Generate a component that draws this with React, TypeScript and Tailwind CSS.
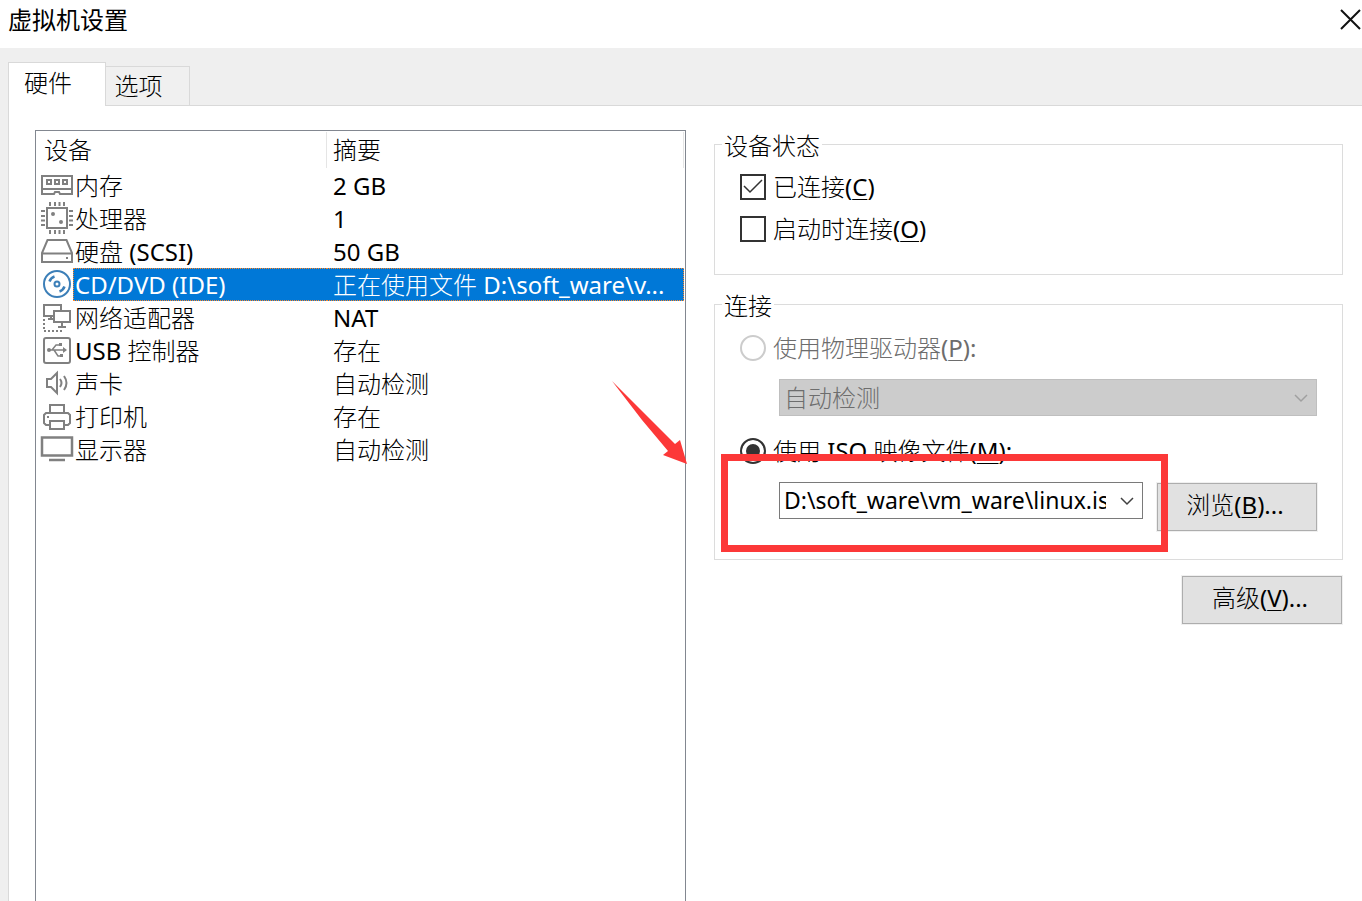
import React, { useState } from 'react';

interface Device {
  id: string;
  name: string;
  summary: string;
  icon: React.ReactNode;
}

const DEVICES: Device[] = [
  {
    id: 'memory',
    name: '内存',
    summary: '2 GB',
    icon: (
      <>
        <path d="M1 6h30v18H19l-1-2h-4l-1 2H1zM1 19h30" />
        <path d="M6 10h4v4H6zM14 10h4v4h-4zM22 10h4v4h-4z" />
      </>
    ),
  },
  {
    id: 'cpu',
    name: '处理器',
    summary: '1',
    icon: (
      <>
        <path d="M6 5h20v20H6z" />
        <path d="M9 -1v4M14 -1v4M18.500 -1v4M23 -1v4M9 27v4M14 27v4M18.500 27v4M23 27v4M0 8h4M0 13h4M0 17.500h4M0 22h4M28 8h4M28 13h4M28 17.500h4M28 22h4" />
        <circle cx="12" cy="11" r="1" />
        <circle cx="20" cy="19" r="1" />
      </>
    ),
  },
  {
    id: 'disk',
    name: '硬盘 (SCSI)',
    summary: '50 GB',
    icon: (
      <>
        <path d="M6.500 4h19L31 17v9H1v-9zM1 17.500h30" />
        <path d="M25 22h2" />
      </>
    ),
  },
  {
    id: 'cd',
    name: 'CD/DVD (IDE)',
    summary: '正在使用文件 D:\\soft_ware\\v...',
    icon: (
      <g stroke="#3c7fb8">
        <circle cx="16" cy="15" r="13" />
        <circle cx="16" cy="15" r="2.500" />
        <path d="M8.500 12.500A8 8 0 0 1 13.500 7.500M23.500 17.500A8 8 0 0 1 18.500 22.500" strokeWidth="2.500" />
      </g>
    ),
  },
  {
    id: 'network',
    name: '网络适配器',
    summary: 'NAT',
    icon: (
      <>
        <path d="M12 14H3V3h17v5M7 17h6M10 14v3" />
        <path d="M13 9h16v11H13zM21 20v4M17 25h8" />
        <path d="M3 17v12h18" strokeDasharray="2 2" />
      </>
    ),
  },
  {
    id: 'usb',
    name: 'USB 控制器',
    summary: '存在',
    icon: (
      <>
        <rect x="3" y="3" width="26" height="25" rx="2" />
        <path d="M8 15h15M11 15l4-5h4M13 15l4 6h3" strokeWidth="1.500" />
        <path d="M22 12l4 3-4 3z" fill="#808080" stroke="none" />
        <circle cx="8" cy="15" r="2" fill="#808080" stroke="none" />
        <path d="M18 8h3v3h-3zM19 19h3v3h-3z" fill="#808080" stroke="none" />
      </>
    ),
  },
  {
    id: 'sound',
    name: '声卡',
    summary: '自动检测',
    icon: (
      <>
        <path d="M6 11h4l6-6v20l-6-6H6z" />
        <path d="M19 11q3 4 0 8M23 8q5 7 0 14" />
      </>
    ),
  },
  {
    id: 'printer',
    name: '打印机',
    summary: '存在',
    icon: (
      <>
        <path d="M9 12V4h14v8M9 24H5l-2-2v-8l2-2h22l2 2v8l-2 2h-4" />
        <path d="M9 20h14v8H9zM6 16h2" />
      </>
    ),
  },
  {
    id: 'display',
    name: '显示器',
    summary: '自动检测',
    icon: (
      <>
        <path d="M1 3.500h30v18H1z" strokeWidth="2.500" />
        <path d="M8 26h16" strokeWidth="2.500" />
      </>
    ),
  },
];

// Chinese runs are drawn in a light weight, Latin runs in the regular one
const Mixed = ({ text }: { text: string }) => (
  <>
    {text.split(/([\x21-\x7e]+)/).map((part, i) =>
      i % 2 ? <span key={i} className="font-normal">{part}</span> : part
    )}
  </>
);

const AccessKey = ({ char, tail = '' }: { char: string; tail?: string }) => (
  <span className="font-normal">
    (<u className="decoration-1 underline-offset-3">{char}</u>){tail}
  </span>
);

const Chevron = ({ color }: { color: string }) => (
  <svg className="pointer-events-none absolute top-3.5 right-2 h-2.5 w-4" viewBox="0 0 16 10" fill="none" stroke={color} strokeWidth="1.500">
    <path d="M2 2l6 6 6-6" />
  </svg>
);

const radioClass =
  'h-[26px] w-[26px] shrink-0 appearance-none rounded-full border-2 border-[#333333] bg-white checked:bg-[#333333] checked:shadow-[inset_0_0_0_4px_white] disabled:border-[#cccccc]';

const buttonClass = 'h-12 w-40 shrink-0 border border-[#adadad] bg-[#e1e1e1] pr-1 pb-1 outline-1 outline-[#f0f0f0]';

const legendClass = '-ml-[18px] px-0.5 pt-1 leading-6';

const CheckRow = ({ id, label, accessKey, defaultChecked }: { id: string; label: string; accessKey: string; defaultChecked?: boolean }) => (
  <div className="flex h-[42px] items-center gap-[7px]">
    <span className="relative h-[26px] w-[26px]">
      <input id={id} type="checkbox" defaultChecked={defaultChecked} className="peer block h-[26px] w-[26px] appearance-none border-2 border-[#333333] bg-white" />
      <svg className="pointer-events-none absolute inset-0 hidden peer-checked:block" viewBox="0 0 26 26" fill="none" stroke="#333333" strokeWidth="1.500">
        <path d="M4 12l6 6L22 6" />
      </svg>
    </span>
    <label htmlFor={id}>
      {label}
      <AccessKey char={accessKey} />
    </label>
  </div>
);

export default function App() {
  const [selected, setSelected] = useState('cd');

  return (
    <div className="flex min-h-screen flex-col overflow-hidden bg-[#efefef] font-['Noto_Sans','Noto_Sans_CJK_SC',sans-serif] text-2xl leading-8 font-light text-black">
      <header className="flex h-12 items-start justify-between bg-white pt-1 pl-2">
        <h1 className="font-normal">虚拟机设置</h1>
        <button aria-label="关闭" className="pt-1">
          <svg className="h-[22px] w-[22px]" viewBox="0 0 22 22" fill="none" stroke="#111" strokeWidth="2">
            <path d="M1 2l19 19M20 2L1 21" />
          </svg>
        </button>
      </header>

      <div role="tablist" className="flex items-end pt-3.5 pl-2">
        <button role="tab" aria-selected="true" className="relative z-10 -mb-px h-11 w-[98px] border border-b-0 border-[#d9d9d9] bg-white pr-[18px] pb-1">
          硬件
        </button>
        <button role="tab" aria-selected="false" className="-ml-px h-[39px] w-[85px] border border-b-0 border-[#d9d9d9] bg-[#f0f0f0] pr-[18px]">
          选项
        </button>
      </div>

      <main className="ml-2 grid flex-1 grid-cols-[651fr_629fr] gap-7 border-t border-l border-[#d9d9d9] bg-white pt-6 pr-[19px] pl-[26px]">
        <div className="border border-b-0 border-[#828790] pr-px">
          <table className="w-full table-fixed border-separate border-spacing-0 text-left">
            <thead>
              <tr className="h-[38px]">
                <th className="w-[37px] p-0" />
                <th className="w-[254px] p-0 font-light">
                  <span className="-ml-[29px] block border-r border-[#e5e5e5] leading-9">设备</span>
                </th>
                <th className="p-0 font-light">
                  <span className="block border-r border-[#e5e5e5] pl-1.5 leading-9">摘要</span>
                </th>
              </tr>
            </thead>
            <tbody>
              {DEVICES.map((device) => {
                const active = device.id === selected;
                return (
                  <tr key={device.id} onClick={() => setSelected(device.id)} className="h-[33px]">
                    <td className="p-0 pl-[5px]">
                      <svg className="block h-8 w-8 overflow-visible" viewBox="0 0 32 32" fill="none" stroke="#808080" strokeWidth="2">
                        {device.icon}
                      </svg>
                    </td>
                    <td
                      className={`border-y border-l border-dotted p-0 pl-px leading-[31px] whitespace-nowrap ${
                        active ? 'border-[#ff8728] bg-[#0078d7] text-white' : 'border-transparent'
                      }`}
                    >
                      <Mixed text={device.name} />
                    </td>
                    <td
                      className={`border-y border-r border-dotted p-0 pl-1.5 leading-[31px] whitespace-nowrap ${
                        active ? 'border-[#ff8728] bg-[#0078d7] text-white' : 'border-transparent'
                      }`}
                    >
                      <Mixed text={device.summary} />
                    </td>
                  </tr>
                );
              })}
            </tbody>
          </table>
        </div>

        <div className="relative">
          <fieldset className="h-[145px] border border-[#dcdcdc] pt-2 pl-[25px]">
            <legend className={legendClass}>设备状态</legend>
            <CheckRow id="connected" label="已连接" accessKey="C" defaultChecked />
            <CheckRow id="connect-on-start" label="启动时连接" accessKey="O" />
          </fieldset>

          <fieldset className="relative mt-[15px] h-[270px] border border-[#dcdcdc] pt-3.5 pr-[25px] pl-[25px]">
            <legend className={legendClass}>连接</legend>
            <div className="flex items-center gap-[7px] text-[#6d6d6d]">
              <input id="physical" type="radio" name="source" disabled className={radioClass} />
              <label htmlFor="physical">
                使用物理驱动器
                <AccessKey char="P" tail=":" />
              </label>
            </div>
            <div className="relative mt-[15px] ml-[39px]">
              <select aria-label="物理驱动器" disabled className="block h-[37px] w-full appearance-none border border-[#bfbfbf] bg-[#cccccc] px-1 text-[#6d6d6d] opacity-100">
                <option>自动检测</option>
              </select>
              <Chevron color="#a0a0a0" />
            </div>

            <div className="mt-[19px] flex items-center gap-[7px]">
              <input id="iso" type="radio" name="source" defaultChecked className={radioClass} />
              <label htmlFor="iso">
                <Mixed text="使用 ISO 映像文件" />
                <AccessKey char="M" tail=":" />
              </label>
            </div>
            <div className="mt-[15px] ml-[39px] flex items-start gap-3.5">
              <div className="relative min-w-0 flex-1">
                <select aria-label="ISO 映像文件" className="block h-[37px] w-full appearance-none border border-[#7a7a7a] bg-white pr-9 pb-0.5 pl-1 text-[23px] font-normal">
                  <option>D:\soft_ware\vm_ware\linux.iso</option>
                </select>
                <Chevron color="#404040" />
              </div>
              <button className={`${buttonClass} mt-px`}>
                浏览
                <AccessKey char="B" tail="..." />
              </button>
            </div>

            {/* highlight round the ISO path */}
            <div className="pointer-events-none absolute right-[174px] bottom-[7px] left-1.5 h-[98px] border-[7px] border-[#fc3838]" />
          </fieldset>

          <div className="mt-4 flex justify-end pr-px">
            <button className={buttonClass}>
              高级
              <AccessKey char="V" tail="..." />
            </button>
          </div>

          <svg className="pointer-events-none absolute top-[251px] -left-[102px] h-[84px] w-[76px]" viewBox="0 0 76 84" fill="#fc3838">
            <path d="M0 0L40 40L63 63L68 59L75 83L51 74L56 70L30 39z" />
          </svg>
        </div>
      </main>
    </div>
  );
}
